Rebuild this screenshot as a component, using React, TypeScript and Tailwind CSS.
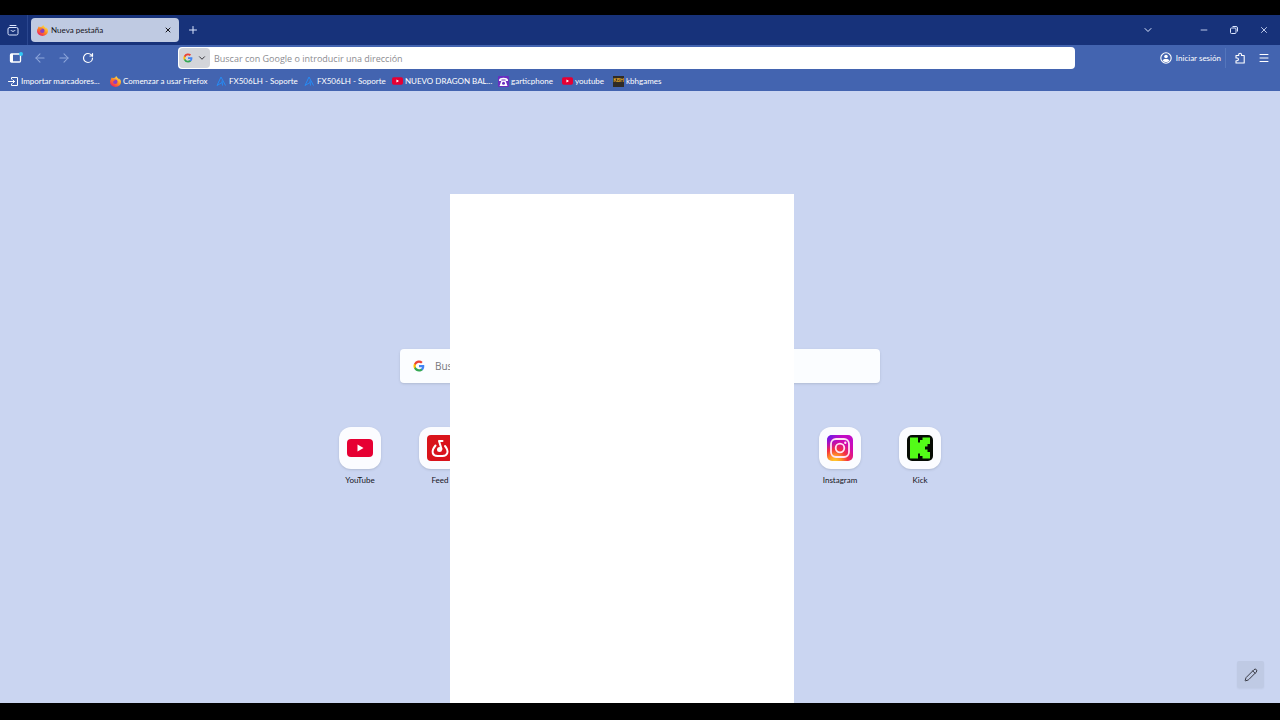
import { ButtonHTMLAttributes, ReactNode, useId } from "react";
import {
	ArrowLeft,
	ArrowRight,
	ChevronDown,
	Menu,
	Minus,
	Pencil,
	Plus,
	RotateCw,
	X,
} from "lucide-react";
import { clsx } from "clsx";

interface IconProps {
	className?: string;
}

function FirefoxIcon({ className }: IconProps) {
	const id = useId();
	return (
		<svg viewBox="0 0 24 24" className={className} aria-hidden="true">
			<defs>
				<linearGradient id={id} x1="0.8" y1="0.1" x2="0.2" y2="0.9">
					<stop offset="0" stopColor="#ffe14a" />
					<stop offset="0.5" stopColor="#ff8a1f" />
					<stop offset="1" stopColor="#f0245c" />
				</linearGradient>
			</defs>
			<path
				fill={`url(#${id})`}
				d="M2 7C2.500 5 3.500 3.500 4.500 2.500c.3 1.200 1 2 1.800 2.500C8 4 10 4 11 4c.5-2 1.500-3.300 3-4 .5 3 4 4.500 6 8 .3-.8.3-1.700.2-2.500C22.500 7.500 24 10 24 13A12 11 0 0 1 0 13C0 10.500.8 8.500 2 7Z"
			/>
			<circle cx="11.500" cy="12.500" r="5" fill="#8a3fc4" />
			<path fill="#ff6a2c" d="M3 8.500c3-1.500 6-1.500 9 .5-2 .2-3.500 1-4 2.500-2 .5-4-.5-5-3Z" />
		</svg>
	);
}

function GoogleIcon({ className }: IconProps) {
	return (
		<svg viewBox="0 0 24 24" className={className} aria-hidden="true">
			<path fill="#4285f4" d="M22.560 12.250c0-.78-.07-1.530-.2-2.250H12v4.260h5.920a5.060 5.060 0 0 1-2.200 3.320v2.770h3.570c2.080-1.920 3.270-4.740 3.270-8.100Z" />
			<path fill="#34a853" d="M12 23c2.970 0 5.460-.98 7.280-2.660l-3.570-2.770c-.98.66-2.230 1.060-3.710 1.060-2.860 0-5.290-1.930-6.160-4.530H2.180v2.840A11 11 0 0 0 12 23Z" />
			<path fill="#fbbc05" d="M5.840 14.090a6.600 6.600 0 0 1 0-4.180V7.070H2.180a11 11 0 0 0 0 9.860l3.660-2.840Z" />
			<path fill="#ea4335" d="M12 5.380c1.620 0 3.060.56 4.210 1.640l3.150-3.150A11 11 0 0 0 2.180 7.070l3.660 2.840C6.710 7.310 9.140 5.380 12 5.380Z" />
		</svg>
	);
}

function YouTubeIcon({ className }: IconProps) {
	return (
		<svg viewBox="0 0 26 18" className={className} aria-hidden="true">
			<rect width="26" height="18" rx="4" fill="#e60033" />
			<path d="M10.500 5.500v7l6-3.500Z" fill="#fff" />
		</svg>
	);
}

function ArchiveIcon() {
	return (
		<svg viewBox="0 0 12 12" className="size-3" fill="none" stroke="currentColor" strokeLinecap="round" aria-hidden="true">
			<path d="M3 1.500h6" />
			<rect x="1" y="3.500" width="10" height="7.500" rx="1.500" />
			<path d="M4 6.500c.5 1.200 3.500 1.200 4 0" />
		</svg>
	);
}

function SidebarIcon() {
	return (
		<svg viewBox="0 0 14 12" className="h-3 w-3.5" aria-hidden="true">
			<rect x="1.500" y="2" width="10" height="8" rx="1" fill="none" stroke="#fff" strokeWidth="1.300" />
			<path d="M1.500 2H4v8H1.500Z" fill="#fff" />
			<circle cx="12" cy="2" r="2" fill="#31c8f5" />
		</svg>
	);
}

function RestoreIcon() {
	return (
		<svg viewBox="0 0 8 8" className="size-2" fill="none" stroke="currentColor" aria-hidden="true">
			<rect x="0.500" y="2" width="5.500" height="5.500" rx="1" />
			<path d="M2.500.5H6A1.500 1.500 0 0 1 7.500 2v3.500" />
		</svg>
	);
}

function AccountIcon() {
	return (
		<svg viewBox="0 0 12 12" className="size-3" aria-hidden="true">
			<circle cx="6" cy="6" r="5.200" fill="none" stroke="currentColor" strokeWidth="1.100" />
			<circle cx="6" cy="4.500" r="1.800" fill="currentColor" />
			<path d="M2.700 8.800C3 7.300 4.200 7 6 7s3 .3 3.300 1.800C8.300 9.700 7.300 10 6 10s-2.300-.3-3.300-1.200Z" fill="currentColor" />
		</svg>
	);
}

function PuzzleIcon() {
	return (
		<svg viewBox="0 0 12 12" className="size-3" fill="none" stroke="currentColor" strokeWidth="1.100" strokeLinejoin="round" aria-hidden="true">
			<path d="M2 5V3.500h2.700V2.600a1.400 1.400 0 0 1 2.800 0v.9h2.700v7.500H2V8.700h1.100a1.300 1.300 0 0 0 0-2.700H2Z" />
		</svg>
	);
}

function ImportIcon() {
	return (
		<svg viewBox="0 0 11 11" className="size-[11px]" fill="none" stroke="currentColor" strokeLinecap="round" strokeLinejoin="round" aria-hidden="true">
			<path d="M3.500 3V1.500h6v8h-6V8M.5 5.500h6M4.800 3.800l1.700 1.700-1.700 1.700" />
		</svg>
	);
}

function SupportIcon() {
	return (
		<svg viewBox="0 0 11 11" className="size-[11px]" fill="none" stroke="#268bf5" aria-hidden="true">
			<path d="M1 9.500 5 1l4.500 8.500M1 9.500l5-3M6 4.500l.5 5" />
		</svg>
	);
}

function GarticIcon() {
	return (
		<svg viewBox="0 0 11 11" className="size-[11px]" aria-hidden="true">
			<rect width="11" height="11" rx="1" fill="#6a2fc0" />
			<path d="M1 4c0-3 9-3 9 0v1H7.500V3.500h-4V5H1Z" fill="#fff" />
			<path d="M3.500 4.500h4L9.500 10h-8Z" fill="#fff" />
			<circle cx="5.500" cy="7.200" r="1.500" fill="#6a2fc0" />
		</svg>
	);
}

function KbhIcon() {
	return (
		<span className="flex h-[11px] w-[11px] items-center justify-center overflow-hidden bg-[#302b26] text-[5px] font-bold text-[#f0b72d]">
			KBH
		</span>
	);
}

function BandLabIcon() {
	return (
		<svg viewBox="0 0 26 26" className="size-[26px]" aria-hidden="true">
			<rect width="26" height="26" rx="4" fill="#d9131b" />
			<g fill="none" stroke="#fff" strokeWidth="2" strokeLinecap="round" strokeLinejoin="round">
				<path d="M8.500 10.500C3.500 16.500 5.500 21 10.500 21h5c5 0 7-4.500 2.500-10" />
				<path d="M12 6l2.500 8M12 6h3.500" />
			</g>
			<circle cx="12.500" cy="14.500" r="2.500" fill="#fff" />
		</svg>
	);
}

function InstagramIcon() {
	return (
		<svg viewBox="0 0 26 26" className="size-[26px]" aria-hidden="true">
			<defs>
				<radialGradient id="ig-warm" cx="0.3" cy="1.050" r="1">
					<stop offset="0" stopColor="#ffd52e" />
					<stop offset="0.25" stopColor="#ff9a24" />
					<stop offset="0.5" stopColor="#f5323f" />
					<stop offset="0.8" stopColor="#d409a8" />
					<stop offset="1" stopColor="#c20bc4" />
				</radialGradient>
				<radialGradient id="ig-cool" cx="0" cy="0" r="0.6">
					<stop offset="0" stopColor="#4b22f0" />
					<stop offset="1" stopColor="#9a10d8" stopOpacity="0" />
				</radialGradient>
			</defs>
			<rect width="26" height="26" rx="5" fill="url(#ig-warm)" />
			<rect width="26" height="26" rx="5" fill="url(#ig-cool)" />
			<g fill="none" stroke="#ffe3f3" strokeWidth="1.800">
				<rect x="4" y="4" width="18" height="18" rx="5" />
				<circle cx="13" cy="13" r="4.300" />
			</g>
			<circle cx="18.300" cy="7.800" r="1.200" fill="#ffe3f3" />
		</svg>
	);
}

function KickIcon() {
	return (
		<svg viewBox="0 0 26 26" className="size-[26px]" aria-hidden="true">
			<rect width="26" height="26" rx="5" fill="#050b04" />
			<path fill="#53fc18" d="M3 2.500h8v5h2V5h2.500V2.500H23V9h-2.500v2.500H18v3h2.500V17H23v6.500h-7.500V21H13v-2.500h-2v5H3Z" />
		</svg>
	);
}

interface IconButtonProps extends ButtonHTMLAttributes<HTMLButtonElement> {
	label: string;
}

function IconButton({ label, className, children, ...props }: IconButtonProps) {
	return (
		<button
			type="button"
			aria-label={label}
			className={clsx("flex h-6 shrink-0 items-center justify-center rounded", className ?? "w-6")}
			{...props}
		>
			{children}
		</button>
	);
}

const bookmarks: { label: string; icon: ReactNode; width: string }[] = [
	{ label: "Importar marcadores...", icon: <ImportIcon />, width: "w-[94px]" },
	{ label: "Comenzar a usar Firefox", icon: <FirefoxIcon className="size-[11px]" />, width: "w-[98px]" },
	{ label: "FX506LH - Soporte", icon: <SupportIcon />, width: "w-20" },
	{ label: "FX506LH - Soporte", icon: <SupportIcon />, width: "w-20" },
	{ label: "NUEVO DRAGON BAL...", icon: <YouTubeIcon className="h-2 w-[11px]" />, width: "w-[98px]" },
	{ label: "garticphone", icon: <GarticIcon />, width: "w-14" },
	{ label: "youtube", icon: <YouTubeIcon className="h-2 w-[11px]" />, width: "w-[43px]" },
	{ label: "kbhgames", icon: <KbhIcon />, width: "w-14" },
];

function TabBar() {
	return (
		<div className="flex h-[30px] items-center bg-[#17327a] text-[#dce6ff]">
			<IconButton label="Ver pestañas recientes" className="ml-px w-6">
				<ArchiveIcon />
			</IconButton>
			<div className="ml-0.5 h-full w-px bg-[#2a468f]" />
			<div className="ml-[3px] flex h-6 w-[148px] items-center rounded-sm bg-[#bfcae2] pl-1.5 text-[#15141a]">
				<FirefoxIcon className="size-[11px]" />
				<span className="ml-[3px] flex-1 text-[8px]">Nueva pestaña</span>
				<IconButton label="Cerrar pestaña" className="w-[22px]">
					<X className="size-2" strokeWidth={3} />
				</IconButton>
			</div>
			<IconButton label="Abrir una pestaña nueva" className="ml-0.5 w-6">
				<Plus className="size-3" />
			</IconButton>
			<div className="ml-auto flex items-center gap-1.5 pr-1">
				<IconButton label="Listar todas las pestañas" className="mr-[26px] w-6">
					<ChevronDown className="size-3" />
				</IconButton>
				<IconButton label="Minimizar">
					<Minus className="size-2.5" />
				</IconButton>
				<IconButton label="Restaurar">
					<RestoreIcon />
				</IconButton>
				<IconButton label="Cerrar">
					<X className="size-2.5" />
				</IconButton>
			</div>
		</div>
	);
}

function NavBar() {
	return (
		<div className="flex h-[26px] items-center text-white">
			<div className="flex w-[178px] shrink-0 items-center pl-1">
				<IconButton label="Mostrar barra lateral">
					<SidebarIcon />
				</IconButton>
				<IconButton label="Atrás" disabled className="w-6 text-[#8fa7db]">
					<ArrowLeft className="size-3.5" strokeWidth={1.8} />
				</IconButton>
				<IconButton label="Adelante" disabled className="w-6 text-[#8fa7db]">
					<ArrowRight className="size-3.5" strokeWidth={1.8} />
				</IconButton>
				<IconButton label="Recargar">
					<RotateCw className="size-3" strokeWidth={2.4} />
				</IconButton>
			</div>
			<div className="flex h-[22px] flex-1 items-center rounded-sm bg-white p-px">
				<button
					type="button"
					aria-label="Cambiar motor de búsqueda"
					className="flex h-full w-[31px] items-center justify-center gap-1 rounded-sm bg-[#d3d5da] text-[#15141a]"
				>
					<GoogleIcon className="size-2.5" />
					<ChevronDown className="size-2.5" />
				</button>
				<input
					type="text"
					aria-label="Buscar con Google o introducir una dirección"
					placeholder="Buscar con Google o introducir una dirección"
					className="h-full min-w-0 flex-1 px-1 font-['Open_Sans',sans-serif] text-[9px] text-[#15141a] outline-none placeholder:text-[#8c8c91]"
				/>
			</div>
			<div className="flex w-[205px] shrink-0 items-center justify-end pr-1">
				<button type="button" className="flex h-5 items-center gap-1 border-r border-[#5475bb] pr-1 text-[8px]">
					<AccountIcon />
					Iniciar sesión
				</button>
				<IconButton label="Extensiones" className="ml-0.5 w-6">
					<PuzzleIcon />
				</IconButton>
				<IconButton label="Abrir menú de la aplicación">
					<Menu className="size-3" />
				</IconButton>
			</div>
		</div>
	);
}

function BookmarksBar() {
	return (
		<nav aria-label="Marcadores" className="flex h-5 items-center gap-2 pl-2 text-[8px] text-white">
			{bookmarks.map(({ label, icon, width }, i) => (
				<a key={i} href="#" className={clsx("flex shrink-0 items-center gap-0.5 whitespace-nowrap", width)}>
					<span className="shrink-0">{icon}</span>
					{label}
				</a>
			))}
		</nav>
	);
}

interface ShortcutProps {
	label: string;
	className?: string;
	children: ReactNode;
}

function Shortcut({ label, className, children }: ShortcutProps) {
	return (
		<a href="#" className={clsx("flex flex-col items-center gap-[5px] text-[8px] leading-3 text-[#15141a]", className)}>
			<span className="flex size-[42px] items-center justify-center rounded-xl bg-[#fbfcff] shadow-sm">
				{children}
			</span>
			{label}
		</a>
	);
}

function NewTab() {
	return (
		<main className="relative flex flex-1 flex-col items-center bg-[#cad5f1] pt-[258px]">
			<label className="flex h-[34px] w-full max-w-[480px] items-center gap-2.5 rounded bg-[#fbfdff] pl-[13px] shadow">
				<GoogleIcon className="size-3" />
				<input
					type="search"
					aria-label="Buscar con Google"
					placeholder="Buscar con Google"
					className="min-w-0 flex-1 font-['Open_Sans',sans-serif] text-[10px] outline-none placeholder:text-[#76767c]"
				/>
			</label>
			<div className="mt-11 grid w-full max-w-[640px] grid-cols-8">
				<Shortcut label="YouTube">
					<YouTubeIcon className="h-[18px] w-[26px]" />
				</Shortcut>
				<Shortcut label="Feed">
					<BandLabIcon />
				</Shortcut>
				<Shortcut label="Instagram" className="col-start-7">
					<InstagramIcon />
				</Shortcut>
				<Shortcut label="Kick">
					<KickIcon />
				</Shortcut>
			</div>
			<button
				type="button"
				aria-label="Personalizar esta página"
				className="absolute right-4 bottom-[15px] flex size-[27px] items-center justify-center rounded-xs bg-[#bfcae4] text-[#35363f] shadow-xs"
			>
				<Pencil className="size-3.5" strokeWidth={1.7} />
			</button>
			{/* blank window floating over the page */}
			<div className="absolute top-[103px] bottom-0 left-[450px] w-[344px] bg-white" />
		</main>
	);
}

export default function App() {
	return (
		<div className="flex min-h-screen flex-col border-t-[15px] border-b-[17px] border-black font-['Lato','Noto_Sans',sans-serif]">
			<header>
				<TabBar />
				<div className="bg-[#4364b0]">
					<NavBar />
					<BookmarksBar />
				</div>
			</header>
			<NewTab />
		</div>
	);
}
